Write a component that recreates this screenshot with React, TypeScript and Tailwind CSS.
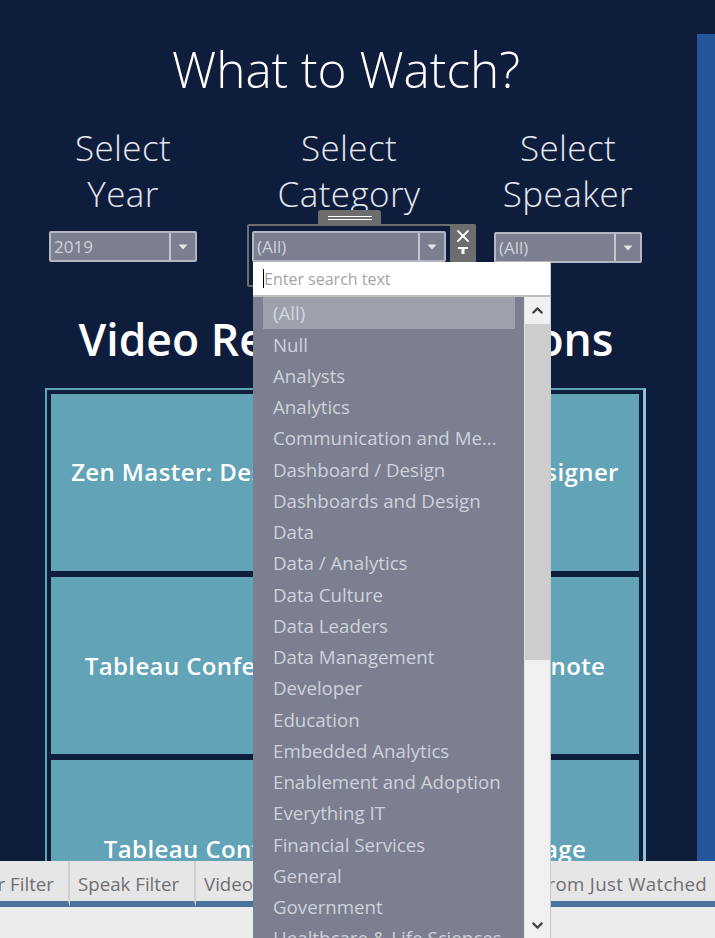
import { ChevronDown, ChevronUp, X } from 'lucide-react'

const categories = [
  'Null',
  'Analysts',
  'Analytics',
  'Communication and Me...',
  'Dashboard / Design',
  'Dashboards and Design',
  'Data',
  'Data / Analytics',
  'Data Culture',
  'Data Leaders',
  'Data Management',
  'Developer',
  'Education',
  'Embedded Analytics',
  'Enablement and Adoption',
  'Everything IT',
  'Financial Services',
  'General',
  'Government',
  'Healthcare & Life Sciences',
]

const videos = [
  { title: 'Zen Master: Designing like a Graphic Designer', pad: 'pb-[22px]' },
  { title: 'Tableau Conference 2019: Opening Keynote', pad: '' },
  { title: 'Tableau Conference 2019: Devs on Stage', pad: '' },
]

const Caret = () => (
  <svg width="10" height="6" viewBox="0 0 10 6" className="fill-[#e4e6ea]">
    <path d="M0.5 0.5h9L5 5.5z" />
  </svg>
)

const Select = ({ value, className }: { value: string; className: string }) => (
  <div
    className={`flex h-[31px] items-stretch rounded-[2px] border-2 border-[#b4b7c1] bg-[#7b7f8f] ${className}`}
  >
    <span className="flex-1 pl-[3px] text-[17px] leading-[27px] text-[#cfd2da]">
      {value}
    </span>
    <span className="flex w-[26px] items-center justify-center border-l-2 border-[#c4c7ce]">
      <Caret />
    </span>
  </div>
)

const FilterHead = ({ top, bottom }: { top: string; bottom: string }) => (
  <h2 className="text-center text-[35px] font-light leading-[46px] tracking-[0.4px] text-[#e3e6ec]">
    {top}
    <br />
    {bottom}
  </h2>
)

const CategoryMenu = () => (
  <div className="absolute left-[253px] top-[262px] flex h-[676px] w-[298px] flex-col overflow-hidden border-r border-[#c8c8c8]">
    <div className="flex h-[35px] shrink-0 items-center border-b-2 border-[#bdbdbd] bg-white pl-[10px]">
      <span className="h-[19px] w-px bg-black" />
      <span className="text-[16px] text-[#a5a5a5]">Enter search text</span>
    </div>
    <div className="flex min-h-0 flex-1">
      <div className="w-[271px] overflow-hidden bg-[#7b7f8f] pl-[10px]">
        <div className="h-[31.5px] w-[252px] bg-[#9ca1ac] pl-[10px] text-[18.7px] leading-[32px] text-[#d4d7de]">
          (All)
        </div>
        {categories.map((c) => (
          <div
            key={c}
            className="h-[31.25px] whitespace-nowrap pl-[10px] text-[18.7px] leading-[31.25px] text-[#cfd2da]"
          >
            {c}
          </div>
        ))}
      </div>
      <div className="flex w-[26px] flex-col items-center border-l border-[#e6e6e6] bg-[#f0f0f0]">
        <div className="flex h-[27px] shrink-0 items-center">
          <ChevronUp size={17} strokeWidth={3} className="text-[#444]" />
        </div>
        <div className="h-[336px] w-full bg-[#cdcdcd]" />
        <div className="flex flex-1 items-end pb-[4px]">
          <ChevronDown size={17} strokeWidth={3} className="text-[#444]" />
        </div>
      </div>
    </div>
  </div>
)

const FloatingFrame = () => (
  <>
    <div className="absolute left-[247px] top-[224px] h-[63px] w-[229px] rounded-[2px] border-2 border-[#6d6d6d]" />
    <div className="absolute left-[318px] top-[210px] flex h-[15px] w-[63px] flex-col items-center justify-center gap-[2px] rounded-t-[3px] bg-[#6d6d6d]">
      <span className="h-px w-[44px] bg-white" />
      <span className="h-px w-[44px] bg-white" />
    </div>
    <div className="absolute left-[450px] top-[224px] flex h-[38px] w-[26px] flex-col items-center rounded-tr-[2px] bg-[#6d6d6d] pt-[2px]">
      <X size={20} strokeWidth={2.2} className="text-white" />
      <svg width="10" height="8" viewBox="0 0 10 8" className="fill-white">
        <path d="M0 1h10v2H6.5v5h-3V3H0z" />
      </svg>
    </div>
  </>
)

export default function App() {
  return (
    <div className="relative flex h-[938px] w-[715px] flex-col overflow-hidden bg-[#ececec] font-['Open_Sans',sans-serif]">
      <div className="flex h-[861px] shrink-0 overflow-hidden bg-[#0e1d3c]">
        <div className="w-[697px] shrink-0">
          <h1 className="mt-[39px] pr-[5px] text-center text-[49.5px] font-light leading-[60px] text-white">
            What to Watch?
          </h1>

          <div className="ml-[49px] mt-[26px] flex">
            <div className="w-[148px]">
              <FilterHead top="Select" bottom="Year" />
              <Select value="2019" className="mt-[14px]" />
            </div>
            <div className="ml-[55px] w-[194px]">
              <FilterHead top="Select" bottom="Category" />
              <Select value="(All)" className="mt-[14px]" />
            </div>
            <div className="ml-[48px] w-[148px]">
              <FilterHead top="Select" bottom="Speaker" />
              <Select value="(All)" className="mt-[15px]" />
            </div>
          </div>

          <h2 className="mt-[47px] whitespace-nowrap pr-[5px] text-center text-[44.5px] font-semibold leading-[58px] text-white">
            Video Recommendations
          </h2>

          <div className="ml-[45px] mt-[20px] w-[601px] border-2 border-r-[3px] border-[#62a3b8] border-r-[#8fc3d3] p-[4px]">
            <div className="flex flex-col gap-[6px]">
              {videos.map((v) => (
                <div
                  key={v.title}
                  className={`flex h-[177px] shrink-0 items-center justify-center whitespace-nowrap bg-[#62a3b8] text-[24px] font-semibold tracking-[0.4px] text-white ${v.pad}`}
                >
                  {v.title}
                </div>
              ))}
            </div>
          </div>
        </div>
        <div className="mt-[34px] flex-1 bg-[#25569b]" />
      </div>

      <div className="flex h-[46px] shrink-0 whitespace-nowrap bg-[#e6e6e6] text-[18.7px] text-[#6f6f73]">
        <div className="ml-[-30px] flex h-full w-[100px] items-start justify-end border-b-[6px] border-r-2 border-[#4a739b] border-r-[#cfcfcf] pr-[14px] pt-[10px] leading-[25px]">
          Year Filter
        </div>
        <div className="flex h-full w-[126px] items-start border-b-[6px] border-r-2 border-[#4a739b] border-r-[#cfcfcf] pl-[8px] pt-[10px] leading-[25px]">
          Speak Filter
        </div>
        <div className="flex h-full min-w-0 flex-1 items-start justify-between overflow-hidden border-b-[6px] border-[#4a739b] pl-[8px] pr-[8px] pt-[10px] leading-[25px]">
          <span>Video</span>
          <span className="tracking-[0.3px]">Recs from Just Watched</span>
        </div>
      </div>

      <FloatingFrame />
      <CategoryMenu />
    </div>
  )
}
